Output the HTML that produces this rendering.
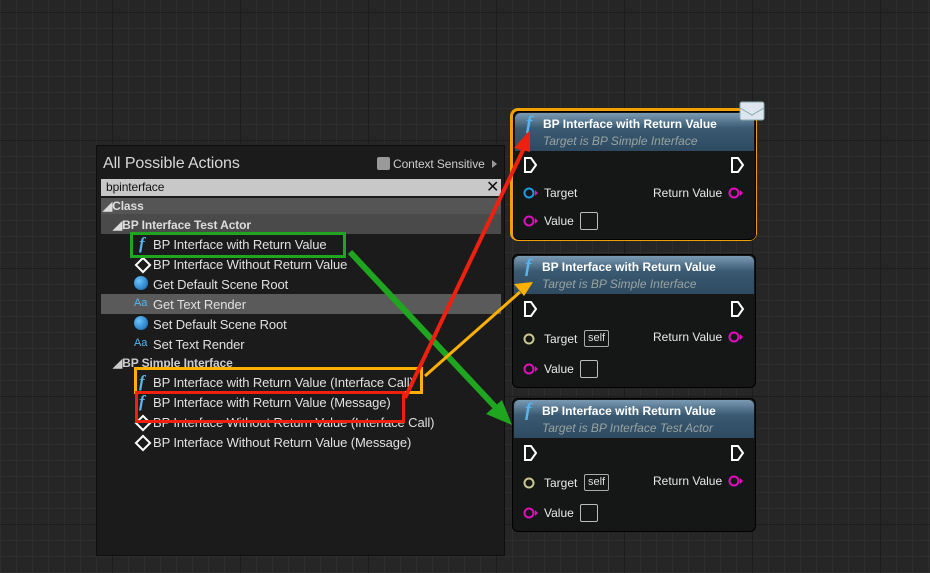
<!DOCTYPE html><html><head><style>
body{margin:0;width:930px;height:573px;overflow:hidden;background:#262626;font-family:"Liberation Sans",sans-serif;position:relative;
background-image:linear-gradient(#1c1c1c 1px,transparent 1px),linear-gradient(90deg,#1c1c1c 1px,transparent 1px),linear-gradient(#2e2e2e 1px,transparent 1px),linear-gradient(90deg,#2e2e2e 1px,transparent 1px);
background-size:128px 128px,128px 128px,16px 16px,16px 16px;background-position:-16px 12px,-16px 12px,-16px 12px,-16px 12px}
.a{position:absolute}
.panel{left:96px;top:145px;width:409px;height:411px;background:#1b1b1b;border:1px solid #0e0e0e;box-sizing:border-box}
.t{position:absolute;color:#e0e0e0;font-size:13px;white-space:nowrap;letter-spacing:-0.1px}
.f{color:#5ab4f0;font-family:"Liberation Serif",serif;font-style:italic;font-weight:bold;font-size:17px;position:absolute}
.dia{position:absolute;width:8px;height:8px;border:2px solid #fff;transform:rotate(45deg);background:#1b1b1b}
.ball{position:absolute;width:14px;height:14px;border-radius:50%;background:radial-gradient(circle at 35% 35%,#6cc4ff,#0a5fa8)}
.node{position:absolute;background:#151716;border-radius:6px;border:1px solid #000}
.hd{position:absolute;left:1px;right:1px;top:1px;height:38px;border-radius:5px 5px 0 0;background:linear-gradient(#7a9bb3,#3a5a72 40%,#2d4a60)}
.nt{position:absolute;color:#fff;font-weight:bold;font-size:12px;left:29px;top:5px}
.ns{position:absolute;color:#9aa3a0;font-style:italic;font-size:12px;left:29px;top:22px}
.nf{left:12px;top:1px;font-size:19px}
.lbl{position:absolute;color:#e8e8e8;font-size:12px}
.box{position:absolute;width:16px;height:16px;border:1px solid #bbb;border-radius:2px}
.self{position:absolute;border:1px solid #aaa;border-radius:2px;color:#ddd;font-size:11px;padding:0 3px;height:15px;line-height:15px}
</style></head><body>
<div class="a panel">
<div class="t" style="left:6px;top:9px;font-size:16px;color:#d8d8d8">All Possible Actions</div>
<div class="a" style="left:280px;top:11px;width:13px;height:13px;background:#999;border-radius:2px"></div>
<div class="t" style="left:296px;top:11px;font-size:12px;color:#ccc">Context Sensitive</div>
<div class="a" style="left:395px;top:14px;border-left:5px solid #999;border-top:4px solid transparent;border-bottom:4px solid transparent"></div>
<div class="a" style="left:4px;top:33px;width:400px;height:17px;background:#c8c8c8"></div>
<div class="t" style="left:9px;top:34px;color:#111;font-size:12px">bpinterface</div>
<div class="t" style="left:389px;top:31px;color:#111;font-size:16px">✕</div>
<div class="a" style="left:4px;top:52px;width:400px;height:16px;background:#555"></div>
<div class="a" style="left:4px;top:68px;width:400px;height:20px;background:#4a4a4a"></div>
<div class="t" style="left:6px;top:53px;font-size:12px;font-weight:bold;color:#ddd">◢Class</div>
<div class="t" style="left:16px;top:72px;font-size:12px;font-weight:bold;color:#ddd">◢BP Interface Test Actor</div>
<div class="a" style="left:4px;top:148px;width:400px;height:20px;background:#5a5a5a"></div>
<div class="f" style="left:42px;top:88px">f</div><div class="t" style="left:56px;top:91px">BP Interface with Return Value</div>
<div class="dia" style="left:40px;top:113px"></div><div class="t" style="left:56px;top:111px">BP Interface Without Return Value</div>
<div class="ball" style="left:37px;top:130px"></div><div class="t" style="left:56px;top:131px">Get Default Scene Root</div>
<div class="t" style="left:37px;top:151px;color:#5ab4f0;font-size:11px">Aa</div><div class="t" style="left:56px;top:151px">Get Text Render</div>
<div class="ball" style="left:37px;top:170px"></div><div class="t" style="left:56px;top:171px">Set Default Scene Root</div>
<div class="t" style="left:37px;top:191px;color:#5ab4f0;font-size:11px">Aa</div><div class="t" style="left:56px;top:191px">Set Text Render</div>
<div class="t" style="left:16px;top:210px;font-size:12px;font-weight:bold;color:#ccc">◢BP Simple Interface</div>
<div class="f" style="left:42px;top:226px">f</div><div class="t" style="left:56px;top:229px">BP Interface with Return Value (Interface Call)</div>
<div class="f" style="left:42px;top:246px">f</div><div class="t" style="left:56px;top:249px">BP Interface with Return Value (Message)</div>
<div class="dia" style="left:40px;top:271px"></div><div class="t" style="left:56px;top:269px">BP Interface Without Return Value (Interface Call)</div>
<div class="dia" style="left:40px;top:291px"></div><div class="t" style="left:56px;top:289px">BP Interface Without Return Value (Message)</div>
</div>
<div class="a" style="left:130px;top:232px;width:210px;height:20px;border:3px solid #1fa51f"></div>
<div class="a" style="left:134px;top:367px;width:283px;height:21px;border:3px solid #ffb000"></div>
<div class="a" style="left:135px;top:391px;width:264px;height:26px;border:3px solid #f02010"></div>

<div class="a" style="left:510px;top:108px;width:247px;height:133px;border:3px solid #f0a000;border-radius:8px;box-sizing:border-box"></div>
<div class="node" style="left:513px;top:111px;width:241px;height:127px">
<div class="hd"></div><div class="f nf">f</div><div class="nt">BP Interface with Return Value</div><div class="ns">Target is BP Simple Interface</div>
</div>
<div class="node" style="left:512px;top:254px;width:242px;height:132px">
<div class="hd"></div><div class="f nf">f</div><div class="nt">BP Interface with Return Value</div><div class="ns">Target is BP Simple Interface</div>
</div>
<div class="node" style="left:512px;top:398px;width:242px;height:132px">
<div class="hd"></div><div class="f nf">f</div><div class="nt">BP Interface with Return Value</div><div class="ns">Target is BP Interface Test Actor</div>
</div>
<svg class="a" style="left:0;top:0" width="930" height="573">
<g fill="none" stroke="#fff" stroke-width="2">
<path d="M525 158h6l5 7-5 7h-6z"/><path d="M732 158h6l5 7-5 7h-6z"/>
<path d="M525 302h6l5 7-5 7h-6z"/><path d="M732 302h6l5 7-5 7h-6z"/>
<path d="M525 446h6l5 7-5 7h-6z"/><path d="M732 446h6l5 7-5 7h-6z"/>
</g>
<g stroke-width="2" fill="none">
<circle cx="529" cy="193" r="4.5" stroke="#1a9be0"/><circle cx="734" cy="193" r="4.5" stroke="#e010c0"/><circle cx="529" cy="221" r="4.5" stroke="#e010c0"/>
<circle cx="529" cy="339" r="4.5" stroke="#c8c890"/><circle cx="734" cy="337" r="4.5" stroke="#e010c0"/><circle cx="529" cy="369" r="4.5" stroke="#e010c0"/>
<circle cx="529" cy="483" r="4.5" stroke="#c8c890"/><circle cx="734" cy="481" r="4.5" stroke="#e010c0"/><circle cx="529" cy="513" r="4.5" stroke="#e010c0"/>
</g>
<g fill="#e010c0"><path d="M535 190l3 3-3 3z"/><path d="M740 190l3 3-3 3z"/><path d="M535 218l3 3-3 3z"/><path d="M740 334l3 3-3 3z"/><path d="M535 366l3 3-3 3z"/><path d="M740 478l3 3-3 3z"/><path d="M535 510l3 3-3 3z"/></g>
<rect x="740" y="102" width="24" height="18" fill="#dde6ee" stroke="#8aa" rx="2"/><path d="M740 108l12 7 12-7" stroke="#8aa" fill="none"/>
<path d="M350 252L500 412" stroke="#1fa51f" stroke-width="6"/><polygon points="512,425 486,414 502,400" fill="#1fa51f"/>
<path d="M425 376L520 292" stroke="#ffb000" stroke-width="3"/><polygon points="533,282 514,284 524,296" fill="#ffb000"/>
<path d="M405 398L524 148" stroke="#f02010" stroke-width="4"/><polygon points="530,130 514,148 530,152" fill="#f02010"/>
</svg>
<div class="lbl" style="left:544px;top:186px">Target</div><div class="lbl" style="left:653px;top:186px">Return Value</div>
<div class="lbl" style="left:544px;top:214px">Value</div><div class="box" style="left:580px;top:212px"></div>
<div class="lbl" style="left:544px;top:332px">Target</div><div class="self" style="left:584px;top:330px">self</div><div class="lbl" style="left:653px;top:330px">Return Value</div>
<div class="lbl" style="left:544px;top:362px">Value</div><div class="box" style="left:580px;top:360px"></div>
<div class="lbl" style="left:544px;top:476px">Target</div><div class="self" style="left:584px;top:474px">self</div><div class="lbl" style="left:653px;top:474px">Return Value</div>
<div class="lbl" style="left:544px;top:506px">Value</div><div class="box" style="left:580px;top:504px"></div>
</body></html>
